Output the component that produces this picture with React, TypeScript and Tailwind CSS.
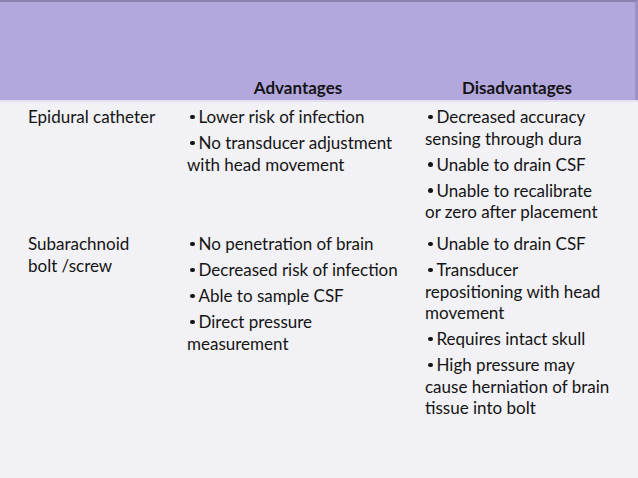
import React from "react";

type Cell = string[][]; // bullets, each split into its visual lines

type Row = {
  device: string[];
  pros: Cell;
  cons: Cell;
};

const rows: Row[] = [
  {
    device: ["Epidural catheter"],
    pros: [["Lower risk of infection"], ["No transducer adjustment", "with head movement"]],
    cons: [
      ["Decreased accuracy", "sensing through dura"],
      ["Unable to drain CSF"],
      ["Unable to recalibrate", "or zero after placement"],
    ],
  },
  {
    device: ["Subarachnoid", "bolt /screw"],
    pros: [
      ["No penetration of brain"],
      ["Decreased risk of infection"],
      ["Able to sample CSF"],
      ["Direct pressure", "measurement"],
    ],
    cons: [
      ["Unable to drain CSF"],
      ["Transducer", "repositioning with head", "movement"],
      ["Requires intact skull"],
      ["High pressure may", "cause herniation of brain", "tissue into bolt"],
    ],
  },
];

function Bullets({ items }: { items: Cell }) {
  return (
    <div className="flex flex-col gap-[4.5px]">
      {items.map((lines, i) => (
        <div key={i} className="whitespace-nowrap">
          {lines.map((line, j) => (
            <div key={j}>
              {j === 0 && (
                <span className="relative -top-[1.5px] mr-[4px] ml-[3px] inline-block h-[4.5px] w-[4.5px] rounded-full bg-current align-middle" />
              )}
              {line}
            </div>
          ))}
        </div>
      ))}
    </div>
  );
}

export default function App() {
  return (
    <div
      className="relative h-[478px] w-[638px] overflow-hidden bg-[#f2f1f5] text-[17px] leading-[21.5px] text-[#141414]"
      style={{ fontFamily: "Lato, 'Open Sans', sans-serif" }}
    >
      <div className="h-[100px] border-t-2 border-r-[3px] border-t-[#8a80ad] border-r-[#9c92c6] bg-[#b3a8dd] pt-[75px]">
        <div className="grid grid-cols-[159px_238px_200px] pl-[20px] font-bold">
          <div />
          <div className="text-center">Advantages</div>
          <div className="text-center">Disadvantages</div>
        </div>
      </div>
      <div className="h-[2px] bg-[#e4e0f1]" />

      <div className="flex flex-col gap-[10.5px] pt-[4px]">
        {rows.map((row, i) => (
          <div key={i} className="grid grid-cols-[159px_238px_1fr] pl-[20px]">
            <div className="pl-[8px]">
              {row.device.map((l) => (
                <div key={l}>{l}</div>
              ))}
            </div>
            <div className="pl-[8px]">
              <Bullets items={row.pros} />
            </div>
            <div className="pl-[8px]">
              <Bullets items={row.cons} />
            </div>
          </div>
        ))}
      </div>
    </div>
  );
}
